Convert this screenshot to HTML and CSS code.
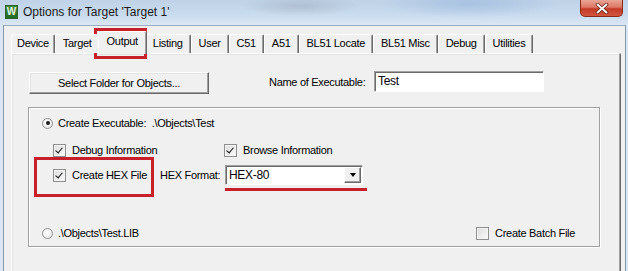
FILE: index.html
```html
<!DOCTYPE html>
<html lang="en">
<head>
  <meta charset="UTF-8" />
  <title>Options for Target 'Target 1'</title>
  <link rel="stylesheet" href="styles.css">
</head>
<body>

<div class="window">
  <div class="titlebar">
    <span class="app-icon">W</span>
    <span class="title">Options for Target 'Target 1'</span>
    <span class="close-btn">
      <svg width="14" height="11" viewBox="0 0 14 11">
        <path d="M2.5 1.5 L11.5 9.5 M11.5 1.5 L2.5 9.5" stroke="#5a1a12" stroke-width="3.4" stroke-linecap="round"/>
        <path d="M2.5 1.5 L11.5 9.5 M11.5 1.5 L2.5 9.5" stroke="#ffffff" stroke-width="2" stroke-linecap="round"/>
      </svg>
    </span>
  </div>

  <div class="client">
    <div class="tabs">
      <span class="tab">Device</span>
      <span class="tab">Target</span>
      <span class="tab active">Output</span>
      <span class="tab">Listing</span>
      <span class="tab">User</span>
      <span class="tab">C51</span>
      <span class="tab">A51</span>
      <span class="tab">BL51 Locate</span>
      <span class="tab">BL51 Misc</span>
      <span class="tab">Debug</span>
      <span class="tab">Utilities</span>
    </div>

    <div class="page">
      <div class="top-row">
        <div class="btn">Select Folder for Objects...</div>
        <span class="name-label">Name of Executable:</span>
        <div class="edit">Test</div>
      </div>

      <div class="group">
        <div class="row row-exe">
          <span class="radio on"></span>
          <span class="txt">Create Executable:&nbsp; .\Objects\Test</span>
        </div>

        <div class="row row-opts">
          <span class="item col-a">
            <span class="check on"></span>
            <span class="txt">Debug Information</span>
          </span>
          <span class="item">
            <span class="check on"></span>
            <span class="txt">Browse Information</span>
          </span>
        </div>

        <div class="row row-hex">
          <span class="item col-hex">
            <span class="check on"></span>
            <span class="txt">Create HEX File</span>
          </span>
          <span class="hex-label">HEX Format:</span>
          <div class="combo">
            <span class="combo-val">HEX-80</span>
            <span class="combo-arrow"></span>
          </div>
        </div>

        <div class="row row-lib">
          <span class="radio"></span>
          <span class="txt">.\Objects\Test.LIB</span>
          <span class="item batch">
            <span class="check"></span>
            <span class="txt">Create Batch File</span>
          </span>
        </div>
      </div>
    </div>
  </div>

  <!-- red annotation marks -->
  <div class="mark mark-tab"></div>
  <div class="mark mark-hex"></div>
  <div class="mark-line"></div>
</div>

</body>
</html>
```

FILE: styles.css
```css
body {
  margin: 0;
  font-family: "Liberation Sans", Arial, sans-serif;
  font-size: 11px;
  color: #000;
}
.window {
  position: relative;
  width: 628px;
  height: 271px;
  overflow: hidden;
  background:
    radial-gradient(ellipse 60px 10px at 300px 6px, rgba(140,150,170,0.35), transparent),
    radial-gradient(ellipse 90px 14px at 470px 4px, rgba(120,160,210,0.35), transparent),
    linear-gradient(to bottom, #bfd2e7 0, #c9dbee 14px, #dae6f3 25px, #dae6f3 100%);
}

/* title bar */
.titlebar {
  height: 25px;
  display: flex;
  align-items: flex-start;
}
.app-icon {
  width: 13px;
  height: 14px;
  margin: 5px 0 0 5px;
  background: linear-gradient(#3f8a3a, #1f6a22);
  border: 1px solid #2c5f2a;
  box-sizing: border-box;
  color: #e8f4e0;
  font: bold 10px/12px "Liberation Sans", Arial, sans-serif;
  text-align: center;
}
.title {
  margin: 5px 0 0 5px;
  font-size: 12px;
  line-height: 14px;
  color: #1a1a1a;
}
.close-btn {
  margin-left: auto;
  margin-right: 5px;
  width: 43px;
  height: 17px;
  box-sizing: border-box;
  border: 1px solid #8a2a1c;
  border-top: none;
  border-radius: 0 0 5px 5px;
  background: linear-gradient(to bottom, #e9a596 0, #dc7864 45%, #c53a25 55%, #d0583f 100%);
  display: flex;
  align-items: center;
  justify-content: center;
}

/* dialog client area */
.client {
  margin: 0 2px 0 3px;
  height: 246px;
  background: #f0f0f0;
  border-top: 1px solid #9aacbf;
  border-left: 1px solid #8798ab;
  border-right: 1px solid #8798ab;
  letter-spacing: -0.3px;
}
.tabs {
  display: flex;
  align-items: flex-end;
  padding: 8px 0 0 7px;
  height: 19px;
  position: relative;
  z-index: 1;
}
.tab {
  height: 18px;
  line-height: 17px;
  padding: 0 7px 0 7px;
  border-top: 1px solid #fff;
  border-left: 1px solid #fff;
  border-right: 1px solid #696969;
  box-shadow: inset -1px 0 0 #a0a0a0;
  border-radius: 2px 2px 0 0;
  background: #f0f0f0;
}
.tab:first-child {
  padding: 0 5px;
}
.tab.active {
  height: 22px;
  line-height: 18px;
  margin: 0 -2px -1px -2px;
  padding: 0 8px 0 8px;
  position: relative;
  z-index: 2;
}
.tab.active + .tab {
  border-left-color: #f0f0f0;
}

.page {
  margin: 0 4px 0 7px;
  height: 226px;
  border-top: 1px solid #fff;
  border-left: 1px solid #fff;
  border-right: 1px solid #696969;
  box-shadow: inset -1px 0 0 #a0a0a0, inset 1px 1px 0 #e3e3e3;
  padding: 17px 0 0 17px;
  box-sizing: border-box;
}

.top-row {
  display: flex;
  align-items: center;
  height: 22px;
}
.btn {
  width: 180px;
  height: 22px;
  box-sizing: border-box;
  border-top: 1px solid #fff;
  border-left: 1px solid #fff;
  border-right: 1px solid #696969;
  border-bottom: 1px solid #696969;
  box-shadow: inset -1px -1px 0 #a0a0a0, inset 1px 1px 0 #e3e3e3;
  text-align: center;
  line-height: 20px;
  margin-top: 1px;
}
.name-label {
  margin-left: 60px;
  width: 105px;
}
.edit {
  width: 170px;
  height: 21px;
  box-sizing: border-box;
  margin-top: -2px;
  background: #fff;
  border-top: 1px solid #a0a0a0;
  border-left: 1px solid #a0a0a0;
  border-right: 1px solid #fff;
  border-bottom: 1px solid #fff;
  box-shadow: inset 1px 1px 0 #696969;
  padding: 2px 0 0 3px;
  font-size: 12px;
  line-height: 14px;
}

/* group box */
.group {
  margin: 14px 0 0 -1px;
  width: 572px;
  height: 140px;
  box-sizing: border-box;
  border: 1px solid #a0a0a0;
  box-shadow: 1px 1px 0 #fff, inset 1px 1px 0 #fff;
  padding: 7px 24px 0 13px;
}
.row {
  display: flex;
  align-items: center;
  height: 16px;
}
.row-opts {
  margin-top: 11px;
  padding-left: 11px;
}
.row-hex {
  margin-top: 7px;
  height: 20px;
  padding-left: 11px;
}
.row-lib {
  margin-top: 40px;
}
.item {
  display: flex;
  align-items: center;
}
.col-a {
  width: 171px;
}
.col-hex {
  width: 107px;
}
.col-hex .txt {
  margin-left: 5px;
}
.txt {
  margin-left: 5px;
  white-space: nowrap;
}
.check + .txt {
  margin-left: 6px;
}
.batch {
  margin-left: auto;
}

.radio {
  width: 11px;
  height: 11px;
  box-sizing: border-box;
  border-radius: 50%;
  border: 1px solid #8e8f8f;
  background: radial-gradient(circle at 40% 40%, #ffffff, #e2e2e2);
  display: flex;
  align-items: center;
  justify-content: center;
}
.radio.on::after {
  content: "";
  width: 4px;
  height: 4px;
  border-radius: 50%;
  background: #1c1c1c;
}
.check {
  width: 13px;
  height: 13px;
  box-sizing: border-box;
  border: 1px solid #8e8f8f;
  background: linear-gradient(135deg, #dcdcdc, #fbfbfb);
  box-shadow: inset 0 0 0 1px #f4f4f4;
  position: relative;
}
.check.on::after {
  content: "";
  position: absolute;
  left: 3px;
  top: 1px;
  width: 3px;
  height: 6px;
  border-right: 1.5px solid #111;
  border-bottom: 1.5px solid #111;
  transform: rotate(40deg);
}

.hex-label {
  width: 65px;
}
.combo {
  width: 138px;
  height: 20px;
  box-sizing: border-box;
  background: #fff;
  border-top: 1px solid #a0a0a0;
  border-left: 1px solid #a0a0a0;
  border-right: 1px solid #fff;
  border-bottom: 1px solid #fff;
  box-shadow: inset 1px 1px 0 #696969;
  display: flex;
  align-items: center;
  padding: 1px 1px 1px 3px;
}
.combo-val {
  flex: 1;
  font-size: 12px;
}
.combo-arrow {
  width: 17px;
  height: 16px;
  box-sizing: border-box;
  background: #f0f0f0;
  border-top: 1px solid #fff;
  border-left: 1px solid #fff;
  border-right: 1px solid #696969;
  border-bottom: 1px solid #696969;
  box-shadow: inset -1px -1px 0 #a0a0a0;
  display: flex;
  align-items: center;
  justify-content: center;
}
.combo-arrow::after {
  content: "";
  border-left: 3.5px solid transparent;
  border-right: 3.5px solid transparent;
  border-top: 4px solid #000;
}

/* annotation marks drawn over the dialog */
.mark {
  position: absolute;
  border: 3px solid #c8202a;
  box-sizing: border-box;
}
.mark-tab {
  left: 94px;
  top: 28px;
  width: 53px;
  height: 31px;
}
.mark-hex {
  left: 34px;
  top: 157px;
  width: 120px;
  height: 40px;
}
.mark-line {
  position: absolute;
  left: 225px;
  top: 188px;
  width: 142px;
  height: 3px;
  background: #c8202a;
}
```
